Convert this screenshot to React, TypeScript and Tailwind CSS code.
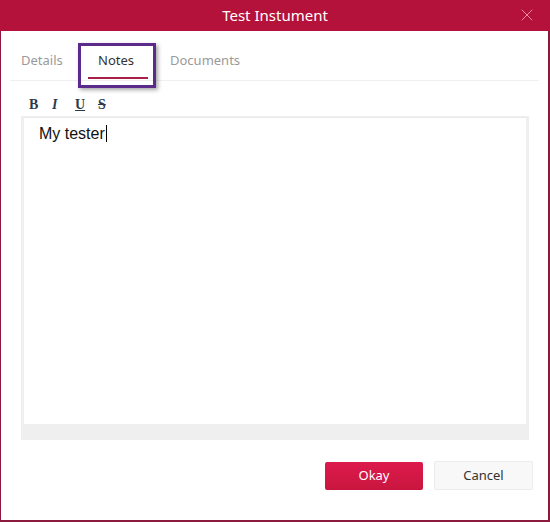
import { X } from "lucide-react";

const tabs = [
    { label: "Details", active: false, cls: "w-[60px] pl-[11px]" },
    { label: "Notes", active: true, cls: "w-[60px] pl-[10px]" },
    { label: "Documents", active: false, cls: "w-[80px] pl-[4px]" },
];

export default function App() {
    return (
        <div
            className="relative w-[550px] h-[522px] bg-white flex flex-col border-l border-r-2 border-b-2 border-[#8c1a3f]"
            style={{ fontFamily: '"Noto Sans", "Open Sans", sans-serif' }}
        >
            {/* title bar */}
            <div className="relative h-[31px] -ml-px -mr-[2px] bg-[#b4123a] flex items-center justify-center">
                <span className="text-[15px] text-white">Test Instument</span>
                <X className="absolute right-[13px] top-[5px] size-[20px] text-[#ef8aa0]" strokeWidth={1.2} />
            </div>

            {/* tabs */}
            <div className="mx-[9px] mt-[13px] h-[37px] flex gap-[18px] border-b border-[#f0f0f0]">
                {tabs.map((t) => (
                    <div key={t.label} className={`relative ${t.cls} text-[13px] pt-[7px]`}>
                        <span className={t.active ? "text-[#333]" : "text-[#9a9a9a]"}>{t.label}</span>
                        {t.active && (
                            <div className="absolute left-0 right-0 bottom-[1px] h-[2px] bg-[#a7224b]" />
                        )}
                    </div>
                ))}
            </div>

            {/* toolbar */}
            <div
                className="ml-[28px] mt-[15px] h-[16px] flex items-center gap-[14px] text-[14px] font-bold text-[#2c3a4b]"
                style={{ fontFamily: '"Liberation Serif", "DejaVu Serif", serif' }}
            >
                <span className="w-[9px]">B</span>
                <span className="w-[9px] italic">I</span>
                <span className="w-[9px] underline">U</span>
                <span className="w-[9px] line-through">S</span>
            </div>

            {/* editor */}
            <div className="ml-[20px] mr-[19px] mt-[4px] h-[324px] bg-[#efefef] flex flex-col px-[3px] pt-[1px] pb-[16px]">
                <div className="flex-1 bg-white border-t border-[#eaeaea] pl-[15px] pt-[3px]">
                    <span
                        className="text-[16px] text-[#111] border-r border-black pr-px"
                        style={{ fontFamily: '"Liberation Sans", Arial, sans-serif' }}
                    >
                        My tester
                    </span>
                </div>
            </div>

            {/* actions */}
            <div className="mt-[21px] mr-[15px] flex justify-end gap-[11px] text-[13px]">
                <button
                    type="button"
                    className="w-[98px] h-[28px] mt-px rounded-[2px] bg-gradient-to-b from-[#dd1a4d] to-[#c9163f] text-white"
                >
                    Okay
                </button>
                <button
                    type="button"
                    className="w-[99px] h-[29px] rounded-[2px] bg-[#f8f8f8] border border-[#ececec] text-[#333]"
                >
                    Cancel
                </button>
            </div>

            {/* highlight annotation */}
            <div className="absolute left-[77px] top-[43px] w-[78px] h-[45px] border-[3px] border-[#5b2a8a] shadow-[2px_2px_4px_rgba(0,0,0,0.35)]" />
        </div>
    );
}
